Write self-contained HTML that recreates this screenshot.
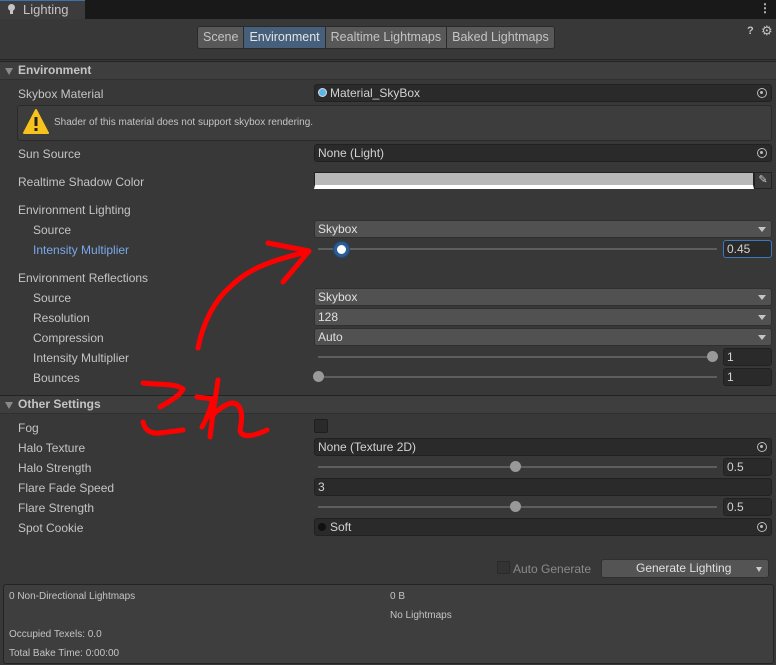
<!DOCTYPE html>
<html><head><meta charset="utf-8"><style>
*{box-sizing:border-box;margin:0;padding:0}
body{width:776px;height:665px;background:#383838;font-family:"Liberation Sans",sans-serif;font-size:12px;color:#c4c4c4;position:relative;overflow:hidden}
.a{position:absolute}
.lbl{position:absolute;left:18px;line-height:14px}
.in{left:33px}
.fld{position:absolute;left:314px;right:4px;height:18px;background:#2a2a2a;border:1px solid #212121;border-radius:3px;padding-left:3px;line-height:16px;color:#d2d2d2}
.dd{position:absolute;left:314px;right:4px;height:18px;background:#515151;border:1px solid #303030;border-radius:3px;padding-left:3px;line-height:16px;color:#e0e0e0}
.dd:after{content:"";position:absolute;right:5px;top:6px;border-left:4px solid transparent;border-right:4px solid transparent;border-top:5px solid #c4c4c4}
.pick{position:absolute;right:4px;top:3px;width:10px;height:10px;border:1.5px solid #bbb;border-radius:50%}
.pick:after{content:"";position:absolute;left:2px;top:2px;width:3px;height:3px;background:#bbb;border-radius:50%}
.sl{position:absolute;left:318px;height:2px;background:#5e5e5e}
.kn{position:absolute;width:11px;height:11px;border-radius:50%;background:#999}
.num{position:absolute;left:723px;right:4px;height:18px;background:#2a2a2a;border:1px solid #212121;border-radius:3px;padding-left:3px;line-height:16px;color:#d2d2d2}
.hdr{position:absolute;left:0;right:0;height:19px;background:#3e3e3e;border-top:1px solid #232323;border-bottom:1px solid #303030;font-weight:bold;line-height:17px;padding-left:18px}
.hdr:before{content:"";position:absolute;left:5px;top:6px;border-left:4px solid transparent;border-right:4px solid transparent;border-top:7px solid #8a8a8a}
</style></head><body>
<div class="a" style="left:0;top:0;width:776px;height:19px;background:#191919"></div>
<div class="a" style="left:0;top:0;width:85px;height:19px;background:#3c3c3c;border-top:1px solid #3a72b0;"></div>
<div class="a" style="left:8px;top:4px;width:7px;height:7px;border-radius:50%;background:#c4c4c4"></div>
<div class="a" style="left:10px;top:10px;width:3px;height:4px;background:#c4c4c4"></div>
<div class="a" style="left:23px;top:2px;line-height:16px;font-size:13px">Lighting</div>
<div class="a" style="left:759px;top:1px;line-height:14px;color:#c4c4c4;font-weight:bold">⋮</div>
<div class="a" style="left:0;top:19px;width:776px;height:41px;background:#383838;border-bottom:1px solid #232323"></div>
<div class="a" style="left:197px;top:26px;height:23px;display:flex;border:1px solid #2a2a2a;border-radius:3px;overflow:hidden;font-size:12.5px;line-height:21px">
<div style="background:#585858;padding:0 5px">Scene</div>
<div style="background:#46607c;padding:0 5px;border-left:1px solid #2a2a2a;color:#e4e4e4">Environment</div>
<div style="background:#585858;padding:0 5px;border-left:1px solid #2a2a2a">Realtime Lightmaps</div>
<div style="background:#585858;padding:0 5px;border-left:1px solid #2a2a2a">Baked Lightmaps</div>
</div>
<div class="a" style="left:747px;top:25px;font-size:11px;font-weight:bold">?</div>
<div class="a" style="left:761px;top:23px;font-size:13px">⚙</div>
<div class="hdr" style="top:61px">Environment</div>
<div class="lbl" style="top:87px">Skybox Material</div>
<div class="fld" style="top:84px;padding-left:15px">Material_SkyBox<span class="a" style="left:3px;top:3px;width:9px;height:9px;border-radius:50%;background:#5bb7ea;border:1px solid #ddd"></span><span class="pick"></span></div>
<div class="a" style="left:17px;top:105px;width:755px;height:36px;background:#3d3d3d;border:1px solid #2a2a2a;border-radius:3px"></div>
<svg class="a" style="left:23px;top:109px" width="26" height="25"><path d="M13 1 L25 24 L1 24 Z" fill="#f7c21b" stroke="#f7c21b" stroke-linejoin="round" stroke-width="2"/><rect x="11.5" y="8" width="3" height="9" fill="#222"/><rect x="11.5" y="19" width="3" height="3" fill="#222"/></svg>
<div class="a" style="left:54px;top:117px;font-size:10px;line-height:12px">Shader of this material does not support skybox rendering.</div>
<div class="lbl" style="top:147px">Sun Source</div>
<div class="fld" style="top:144px">None (Light)<span class="pick"></span></div>
<div class="lbl" style="top:175px">Realtime Shadow Color</div>
<div class="a" style="left:314px;top:172px;width:440px;height:17px;background:#b8b8b8;border:1px solid #222;border-bottom:4px solid #fff"></div>
<div class="a" style="left:754px;top:172px;width:18px;height:17px;background:#3a3a3a;border:1px solid #222;color:#ccc;font-size:11px;line-height:15px;text-align:center">✎</div>
<div class="lbl" style="top:203px">Environment Lighting</div>
<div class="lbl in" style="top:223px">Source</div>
<div class="dd" style="top:220px">Skybox</div>
<div class="lbl in" style="top:243px;color:#7ba7ea">Intensity Multiplier</div>
<div class="sl" style="top:248px;width:399px"></div>
<div class="kn" style="left:334px;top:242px;width:15px;height:15px;background:#fff;border:3px solid #2a5d94;box-shadow:0 0 0 1px #1e4a7a"></div>
<div class="num" style="top:240px;border-color:#3a79bb">0.45</div>
<div class="lbl" style="top:271px">Environment Reflections</div>
<div class="lbl in" style="top:291px">Source</div>
<div class="dd" style="top:288px">Skybox</div>
<div class="lbl in" style="top:311px">Resolution</div>
<div class="dd" style="top:308px">128</div>
<div class="lbl in" style="top:331px">Compression</div>
<div class="dd" style="top:328px">Auto</div>
<div class="lbl in" style="top:351px">Intensity Multiplier</div>
<div class="sl" style="top:356px;width:399px"></div>
<div class="kn" style="left:707px;top:351px"></div>
<div class="num" style="top:348px">1</div>
<div class="lbl in" style="top:371px">Bounces</div>
<div class="sl" style="top:376px;width:399px"></div>
<div class="kn" style="left:313px;top:371px"></div>
<div class="num" style="top:368px">1</div>
<div class="hdr" style="top:395px">Other Settings</div>
<div class="lbl" style="top:421px">Fog</div>
<div class="a" style="left:314px;top:419px;width:14px;height:14px;background:#2a2a2a;border:1px solid #1e1e1e;border-radius:2px"></div>
<div class="lbl" style="top:441px">Halo Texture</div>
<div class="fld" style="top:438px">None (Texture 2D)<span class="pick"></span></div>
<div class="lbl" style="top:461px">Halo Strength</div>
<div class="sl" style="top:466px;width:399px"></div>
<div class="kn" style="left:510px;top:461px"></div>
<div class="num" style="top:458px">0.5</div>
<div class="lbl" style="top:481px">Flare Fade Speed</div>
<div class="fld" style="top:478px">3</div>
<div class="lbl" style="top:501px">Flare Strength</div>
<div class="sl" style="top:506px;width:399px"></div>
<div class="kn" style="left:510px;top:501px"></div>
<div class="num" style="top:498px">0.5</div>
<div class="lbl" style="top:521px">Spot Cookie</div>
<div class="fld" style="top:518px;padding-left:15px">Soft<span class="a" style="left:3px;top:4px;width:8px;height:8px;border-radius:50%;background:#111"></span><span class="pick"></span></div>
<div class="a" style="left:497px;top:561px;width:13px;height:13px;background:#333;border:1px solid #2a2a2a;border-radius:2px"></div>
<div class="a" style="left:513px;top:562px;color:#8a8a8a">Auto Generate</div>
<div class="a" style="left:601px;top:559px;width:168px;height:19px;background:#545454;border:1px solid #303030;border-radius:3px;line-height:17px;padding-left:34px;color:#e0e0e0">Generate Lighting<span class="a" style="right:6px;top:7px;border-left:3px solid transparent;border-right:3px solid transparent;border-top:5px solid #ccc"></span></div>
<div class="a" style="left:3px;top:584px;width:771px;height:80px;background:#3e3e3e;border:1px solid #242424;border-radius:3px;font-size:10px;color:#c4c4c4">
<div class="a" style="left:5px;top:6px">0 Non-Directional Lightmaps</div>
<div class="a" style="left:386px;top:6px">0 B</div>
<div class="a" style="left:386px;top:25px">No Lightmaps</div>
<div class="a" style="left:5px;top:44px">Occupied Texels: 0.0</div>
<div class="a" style="left:5px;top:63px">Total Bake Time: 0:00:00</div>
</div>
<svg class="a" style="left:0;top:0" width="776" height="665" fill="none" stroke="#ff0000" stroke-width="5" stroke-linecap="round" stroke-linejoin="round">
<path d="M198 348 C203 322 215 300 230 287 C245 272 263 262 307 252"/>
<path d="M268 243 L309 251 L283 282"/>
<path d="M143 383 C160 385 175 383 183 389 C180 396 168 402 160 407"/>
<path d="M143 422 C145 430 150 434 160 433 L183 430"/>
<path d="M218 380 C215 400 212 420 210 437"/>
<path d="M197 397 L213 399 C210 410 206 420 202 427"/>
<path d="M210 417 C218 410 226 403 233 403 C244 405 242 420 240 430 C241 437 250 438 267 430"/>
</svg>
</body></html>
